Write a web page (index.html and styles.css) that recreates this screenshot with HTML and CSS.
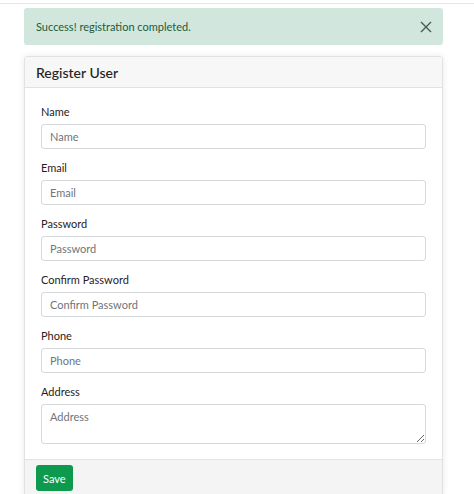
FILE: index.html
```html
<!DOCTYPE html>
<html lang="en">
<head>
<meta charset="utf-8">
<title>Register User</title>
<link rel="stylesheet" href="styles.css">
</head>
<body>
<div class="topbar"></div>
<main class="container">
  <div class="alert">
    <span>Success! registration completed.</span>
    <button class="close" type="button" aria-label="Close">
      <svg width="12" height="12" viewBox="0 0 12 12"><path d="M1 1L11 11M11 1L1 11" stroke="#4a5a52" stroke-width="1.4" fill="none"/></svg>
    </button>
  </div>
  <section class="card">
    <header class="card-header">Register User</header>
    <form class="card-body">
      <div class="group"><label>Name</label><input class="field" placeholder="Name"></div>
      <div class="group"><label>Email</label><input class="field" placeholder="Email"></div>
      <div class="group"><label>Password</label><input class="field" placeholder="Password"></div>
      <div class="group"><label>Confirm Password</label><input class="field" placeholder="Confirm Password"></div>
      <div class="group"><label>Phone</label><input class="field" placeholder="Phone"></div>
      <div class="group last"><label>Address</label><textarea class="field area" placeholder="Address"></textarea></div>
    </form>
    <footer class="card-footer"><button class="btn" type="button">Save</button></footer>
  </section>
</main>
</body>
</html>
```
FILE: styles.css
```css
html, body { margin: 0; padding: 0; background: #fff; }
body { font-family: "Lato", "Noto Sans", sans-serif; font-size: 11px; color: #212529; }
.topbar { height: 3px; border-bottom: 1px solid #e6e6e6; }
.container { padding: 4px 31px 0 24px; }
.alert {
  height: 37px; box-sizing: border-box;
  background: #d1e7dd; color: #1e5a3c; border-radius: 3px;
  display: flex; align-items: center; justify-content: space-between;
  padding: 0 10px 0 12px; font-size: 11px;
}
.close { background: none; border: 0; padding: 0; width: 14px; height: 14px; display: flex; align-items: center; justify-content: center; }
.card {
  margin-top: 11px; border: 1px solid #e2e2e2; border-radius: 3px;
  box-shadow: 0 0 7px rgba(0,0,0,0.09); overflow: hidden;
}
.card-header {
  height: 31px; box-sizing: border-box; background: #f7f7f7;
  border-bottom: 1px solid #e2e2e2; padding: 0 11px;
  display: flex; align-items: center; font-size: 14px; font-weight: 500; color: #222;
}
.card-body { padding: 16px 16px 15px; }
.group { display: flex; flex-direction: column; margin-bottom: 11px; }
.group.last { margin-bottom: 0; }
label { line-height: 16px; margin-bottom: 4px; color: #2a1a22; }
.field {
  height: 25px; box-sizing: border-box; border: 1px solid #d6d9dc; border-radius: 3px;
  padding: 0 8px; font-family: inherit; font-size: 11px; color: #333; margin: 0;
}
.field::placeholder { color: #6f757a; }
.area { height: 40px; padding-top: 5px; resize: vertical; }
.card-footer { background: #f4f4f4; border-top: 1px solid #e2e2e2; padding: 5px 11px; }
.btn {
  background: #0d9a4e; color: #fff; border: 0; border-radius: 3px;
  height: 26px; padding: 0 7px; font-family: inherit; font-size: 11px;
}
```
